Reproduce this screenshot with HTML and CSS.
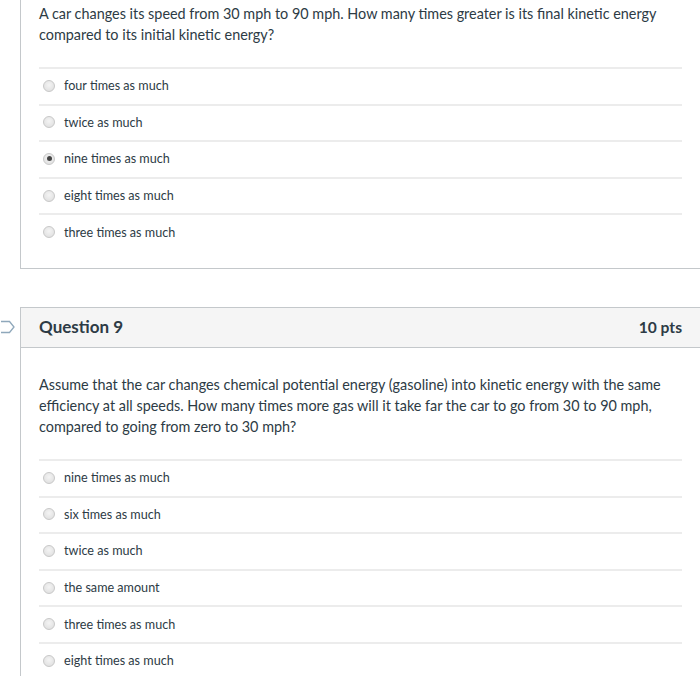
FILE: index.html
```html
<!DOCTYPE html>
<html>
<head>
<meta charset="utf-8">
<link rel="stylesheet" href="styles.css">
</head>
<body>
<div class="quiz">
  <section class="panel first">
    <div class="body">
      <p class="qtext">A car changes its speed from 30 mph to 90 mph. How many times greater is its final kinetic energy compared to its initial kinetic energy?</p>
      <ul class="answers">
        <li><span class="radio"></span>four times as much</li>
        <li><span class="radio"></span>twice as much</li>
        <li><span class="radio checked"></span>nine times as much</li>
        <li><span class="radio"></span>eight times as much</li>
        <li><span class="radio"></span>three times as much</li>
      </ul>
    </div>
  </section>

  <section class="panel second">
    <svg class="flag" width="16" height="16" viewBox="0 0 16 16"><path d="M-2 2.5 H8.5 L13 8 L8.5 13.5 H-2" fill="none" stroke="#8fa8bb" stroke-width="1.3"/></svg>
    <header class="head">
      <h2>Question 9</h2>
      <span class="pts">10 pts</span>
    </header>
    <div class="body">
      <p class="qtext">Assume that the car changes chemical potential energy (gasoline) into kinetic energy with the same efficiency at all speeds. How many times more gas will it take far the car to go from 30 to 90 mph, compared to going from zero to 30 mph?</p>
      <ul class="answers">
        <li><span class="radio"></span>nine times as much</li>
        <li><span class="radio"></span>six times as much</li>
        <li><span class="radio"></span>twice as much</li>
        <li><span class="radio"></span>the same amount</li>
        <li><span class="radio"></span>three times as much</li>
        <li><span class="radio"></span>eight times as much</li>
      </ul>
    </div>
  </section>
</div>
</body>
</html>
```
FILE: styles.css
```css
* { box-sizing: border-box; }
html, body { margin: 0; padding: 0; background: #fff; }
body {
  font-family: Lato, "Open Sans", sans-serif;
  color: #2d3b45;
  width: 700px;
  height: 676px;
  overflow: hidden;
}
.quiz { padding-left: 20px; }
.panel {
  position: relative;
  border-left: 1px solid #c4c8cb;
  border-bottom: 1px solid #c4c8cb;
}
.panel.first { height: 269px; }
.panel.second { margin-top: 38px; border-bottom: none; }
.flag { position: absolute; left: -20px; top: 12px; }
.head {
  display: flex;
  justify-content: space-between;
  align-items: center;
  height: 41px;
  background: #f5f5f5;
  border-top: 1px solid #c4c8cb;
  border-bottom: 1px solid #c4c8cb;
  padding: 0 18px 2px 18px;
}
.head h2 { margin: 0; font-size: 17px; font-weight: 700; }
.pts { font-size: 15.6px; font-weight: 700; }
.body { padding: 3px 18px 0 18px; }
.second .body { padding-top: 26px; }
.qtext {
  margin: 0 0 22px 0;
  font-size: 14.4px;
  line-height: 21px;
}
.answers { list-style: none; margin: 0; padding: 0; }
.answers li {
  display: flex;
  align-items: center;
  height: 36.6px;
  border-top: 2px solid #ececec;
  font-size: 12.6px;
  padding-left: 4px;
  padding-bottom: 1px;
}
.radio {
  width: 12px;
  height: 12px;
  border-radius: 50%;
  border: 1px solid #c8c8c8;
  background: radial-gradient(circle at 50% 40%, #f4f4f4 0%, #dcdcdc 100%);
  margin-right: 9px;
  position: relative;
}
.radio.checked::after {
  content: "";
  position: absolute;
  left: 2.5px; top: 2.5px;
  width: 5px; height: 5px;
  border-radius: 50%;
  background: #444;
}
```
